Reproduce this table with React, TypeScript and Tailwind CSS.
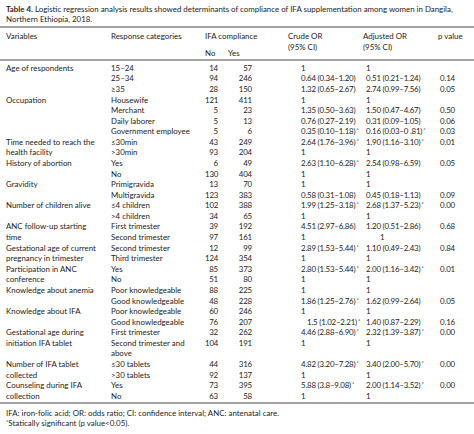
import React from 'react'

type Line = {
  v?: string
  r: string
  no?: string
  yes?: string
  crude?: string
  adj?: string
  p?: string
  crudeIndent?: boolean
  adjIndent?: boolean
}

const lines: Line[] = [
  { v: 'Age of respondents', r: '15–24', no: '14', yes: '57', crude: '1', adj: '1' },
  { r: '25–34', no: '94', yes: '246', crude: '0.64 (0.34–1.20)', adj: '0.51 (0.21–1.24)', p: '0.14' },
  { r: '≥35', no: '28', yes: '150', crude: '1.32 (0.65–2.67)', adj: '2.74 (0.99–7.56)', p: '0.05' },
  { v: 'Occupation', r: 'Housewife', no: '121', yes: '411', crude: '1', adj: '1' },
  { r: 'Merchant', no: '5', yes: '23', crude: '1.35 (0.50–3.63)', adj: '1.50 (0.47–4.67)', p: '0.50' },
  { r: 'Daily laborer', no: '5', yes: '13', crude: '0.76 (0.27–2.19)', adj: '0.31 (0.09–1.05)', p: '0.06' },
  { r: 'Government employee', no: '5', yes: '6', crude: '0.35 (0.10–1.18)*', adj: '0.16 (0.03–0 .81)*', p: '0.03' },
  { v: 'Time needed to reach the', r: '≤30min', no: '43', yes: '249', crude: '2.64 (1.76–3.96)*', adj: '1.90 (1.16–3.10)*', p: '0.01' },
  { v: 'health facility', r: '>30min', no: '93', yes: '204', crude: '1', adj: '1' },
  { v: 'History of abortion', r: 'Yes', no: '6', yes: '49', crude: '2.63 (1.10–6.28)*', adj: '2.54 (0.98–6.59)', p: '0.05' },
  { r: 'No', no: '130', yes: '404', crude: '1', adj: '1' },
  { v: 'Gravidity', r: 'Primigravida', no: '13', yes: '70', crude: '1', adj: '1' },
  { r: 'Multigravida', no: '123', yes: '383', crude: '0.58 (0.31–1.08)', adj: '0.45 (0.18–1.13)', p: '0.09' },
  { v: 'Number of children alive', r: '≤4 children', no: '102', yes: '388', crude: '1.99 (1.25–3.18)*', adj: '2.68 (1.37–5.23)*', p: '0.00' },
  { r: '>4 children', no: '34', yes: '65', crude: '1', adj: '1' },
  { v: 'ANC follow-up starting', r: 'First trimester', no: '39', yes: '192', crude: '4.51 (2.97–6.86)', adj: '1.20 (0.51–2.86)', p: '0.68' },
  { v: 'time', r: 'Second trimester', no: '97', yes: '161', crude: '1', adj: '1', adjIndent: true },
  { v: 'Gestational age of current', r: 'Second trimester', no: '12', yes: '99', crude: '2.89 (1.53–5.44)*', adj: '1.10 (0.49–2.43)', p: '0.84' },
  { v: 'pregnancy in trimester', r: 'Third trimester', no: '124', yes: '354', crude: '1', adj: '1' },
  { v: 'Participation in ANC', r: 'Yes', no: '85', yes: '373', crude: '2.80 (1.53–5.44)*', adj: '2.00 (1.16–3.42)*', p: '0.01' },
  { v: 'conference', r: 'No', no: '51', yes: '80', crude: '1', adj: '1' },
  { v: 'Knowledge about anemia', r: 'Poor knowledgeable', no: '88', yes: '225', crude: '1', adj: '1' },
  { r: 'Good knowledgeable', no: '48', yes: '228', crude: '1.86 (1.25–2.76)*', adj: '1.62 (0.99–2.64)', p: '0.05' },
  { v: 'Knowledge about IFA', r: 'Poor knowledgeable', no: '60', yes: '246', crude: '1', adj: '1' },
  { r: 'Good knowledgeable', no: '76', yes: '207', crude: '1.5 (1.02–2.21)*', adj: '1.40 (0.87–2.29)', p: '0.16', crudeIndent: true },
  { v: 'Gestational age during', r: 'First trimester', no: '32', yes: '262', crude: '4.46 (2.88–6.90)*', adj: '2.32 (1.39–3.87)*', p: '0.00' },
  { v: 'initiation IFA tablet', r: 'Second trimester and', no: '104', yes: '191', crude: '1', adj: '1' },
  { r: 'above' },
  { v: 'Number of IFA tablet', r: '≤30 tablets', no: '44', yes: '316', crude: '4.82 (3.20–7.28)*', adj: '3.40 (2.00–5.70)*', p: '0.00' },
  { v: 'collected', r: '>30 tablets', no: '92', yes: '137', crude: '1', adj: '1' },
  { v: 'Counseling during IFA', r: 'Yes', no: '73', yes: '395', crude: '5.88 (3.8–9.08)*', adj: '2.00 (1.14–3.52)*', p: '0.00' },
  { v: 'collection', r: 'No', no: '63', yes: '58', crude: '1', adj: '1' },
]

function Val({ text }: { text?: string }) {
  if (!text) return null
  if (text.endsWith('*')) {
    return (
      <>
        {text.slice(0, -1)}
        <span className="relative -top-[2px] ml-[1px] text-[5.5px] leading-none">*</span>
      </>
    )
  }
  return <>{text}</>
}

const cols = 'grid grid-cols-[105px_94px_23px_59px_75px_75px_37px]'

export default function App() {
  return (
    <div
      className="w-[474px] h-[434px] bg-white text-[#1e1b1c] pl-[6px] pt-[4px] text-[7.9px] overflow-hidden"
      style={{ fontFamily: 'Lato, "Open Sans", sans-serif' }}
    >
      {/* Caption */}
      <p className="leading-[10.2px] pr-[4px]">
        <span className="font-bold">Table 4.</span>{' '}
        Logistic regression analysis results showed determinants of compliance of IFA supplementation among women in Dangila,
        Northern Ethiopia, 2018.
      </p>

      <div className="h-[2px] bg-[#a3a3a3] mt-[2px] -ml-[6px]" />

      {/* Header */}
      <div className={`${cols} leading-[10.2px] pt-[3px]`}>
        <div>Variables</div>
        <div>Response categories</div>
        <div className="col-span-2">
          <div>IFA compliance</div>
          <div className="flex mt-[6px]">
            <span className="w-[23px]">No</span>
            <span>Yes</span>
          </div>
        </div>
        <div className="pl-[1px]">
          <div>Crude OR</div>
          <div>(95% CI)</div>
        </div>
        <div className="pl-[1px]">
          <div>Adjusted OR</div>
          <div>(95% CI)</div>
        </div>
        <div className="pl-[1px]">p value</div>
      </div>

      <div className="h-[2px] bg-[#a3a3a3] mt-[1px] -ml-[6px]" />

      {/* Body */}
      <div className="pt-[2px] pb-[1px]">
        {lines.map((l, i) => (
          <div key={i} className={`${cols} h-[10.58px] leading-[10.58px] whitespace-nowrap`}>
            <div>{l.v}</div>
            <div>{l.r}</div>
            <div className="text-right pr-[10px] tracking-[-0.15px]">{l.no}</div>
            <div>
              <div className="w-[24px] text-right tracking-[-0.15px]">{l.yes}</div>
            </div>
            <div className={`tracking-[-0.2px] ${l.crudeIndent ? 'pl-[20px]' : 'pl-[14px]'}`}>
              <Val text={l.crude} />
            </div>
            <div className={`tracking-[-0.2px] ${l.adjIndent ? 'pl-[18px]' : 'pl-[4px]'}`}>
              <Val text={l.adj} />
            </div>
            <div className="pl-[3px] tracking-[-0.15px]">{l.p}</div>
          </div>
        ))}
      </div>

      <div className="h-[2px] bg-[#a3a3a3] -ml-[6px]" />

      {/* Footnotes */}
      <div className="leading-[10px] pt-[4px]">
        <p>IFA: iron-folic acid; OR: odds ratio; CI: confidence interval; ANC: antenatal care.</p>
        <p>
          <span className="relative -top-[2px] text-[5.5px] leading-none">*</span>Statically significant (p value{'<'}0.05).
        </p>
      </div>
    </div>
  )
}
